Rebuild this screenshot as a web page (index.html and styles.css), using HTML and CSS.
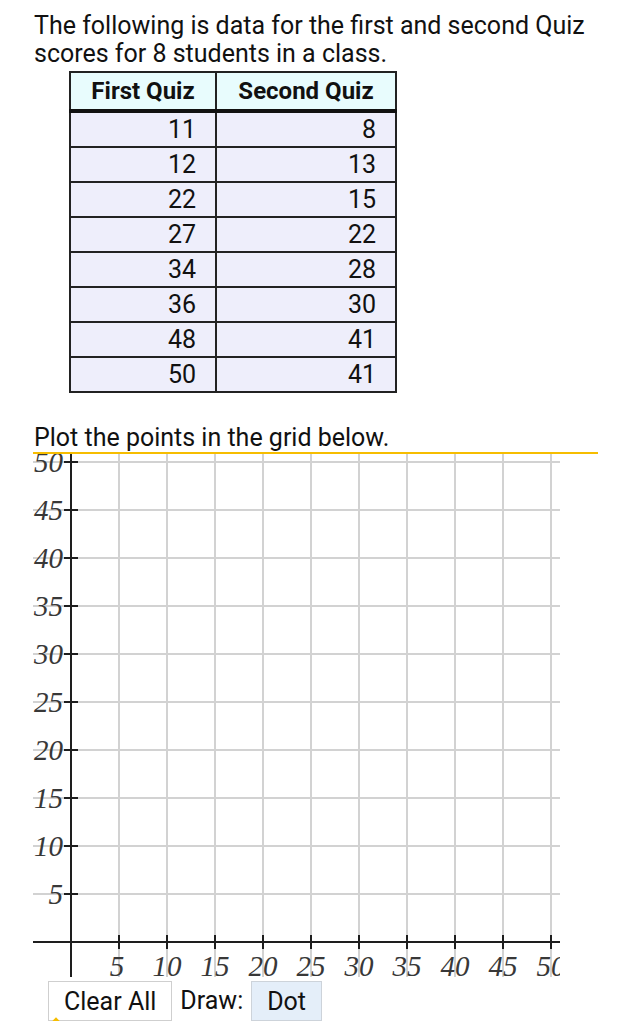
FILE: index.html
```html
<!DOCTYPE html>
<html>
<head>
<meta charset="utf-8">
<link rel="stylesheet" href="styles.css">
</head>
<body>
<div class="page">
  <p class="intro">The following is data for the first and second Quiz scores for 8 students in a class.</p>
  <table class="data">
    <colgroup><col class="c1"><col class="c2"></colgroup>
    <thead>
      <tr><th>First Quiz</th><th>Second Quiz</th></tr>
    </thead>
    <tbody>
      <tr><td>11</td><td>8</td></tr>
      <tr><td>12</td><td>13</td></tr>
      <tr><td>22</td><td>15</td></tr>
      <tr><td>27</td><td>22</td></tr>
      <tr><td>34</td><td>28</td></tr>
      <tr><td>36</td><td>30</td></tr>
      <tr><td>48</td><td>41</td></tr>
      <tr><td>50</td><td>41</td></tr>
    </tbody>
  </table>
  <p class="prompt">Plot the points in the grid below.</p>
  <div class="graph-wrap">
    <svg class="graph" width="527" height="527" viewBox="33 453 527 527" xmlns="http://www.w3.org/2000/svg">
      <g stroke="#d2d2d2" stroke-width="2">
        <line x1="33" y1="893" x2="560" y2="893"/>
        <line x1="33" y1="845" x2="560" y2="845"/>
        <line x1="33" y1="797" x2="560" y2="797"/>
        <line x1="33" y1="749" x2="560" y2="749"/>
        <line x1="33" y1="701" x2="560" y2="701"/>
        <line x1="33" y1="653" x2="560" y2="653"/>
        <line x1="33" y1="605" x2="560" y2="605"/>
        <line x1="33" y1="557" x2="560" y2="557"/>
        <line x1="33" y1="509" x2="560" y2="509"/>
        <line x1="33" y1="461" x2="560" y2="461"/>
        <line x1="119" y1="440" x2="119" y2="976"/>
        <line x1="167" y1="440" x2="167" y2="976"/>
        <line x1="215" y1="440" x2="215" y2="976"/>
        <line x1="263" y1="440" x2="263" y2="976"/>
        <line x1="311" y1="440" x2="311" y2="976"/>
        <line x1="359" y1="440" x2="359" y2="976"/>
        <line x1="407" y1="440" x2="407" y2="976"/>
        <line x1="455" y1="440" x2="455" y2="976"/>
        <line x1="503" y1="440" x2="503" y2="976"/>
        <line x1="551" y1="440" x2="551" y2="976"/>
      </g>
      <g class="ylab" text-anchor="end">
        <text x="63" y="903">5</text>
        <text x="63" y="855">10</text>
        <text x="63" y="807">15</text>
        <text x="63" y="759">20</text>
        <text x="63" y="711">25</text>
        <text x="63" y="663">30</text>
        <text x="63" y="615">35</text>
        <text x="63" y="567">40</text>
        <text x="63" y="519">45</text>
        <text x="63" y="471">50</text>
      </g>
      <g class="xlab" text-anchor="middle">
        <text x="117" y="975">5</text>
        <text x="167" y="975">10</text>
        <text x="215" y="975">15</text>
        <text x="263" y="975">20</text>
        <text x="311" y="975">25</text>
        <text x="359" y="975">30</text>
        <text x="407" y="975">35</text>
        <text x="455" y="975">40</text>
        <text x="503" y="975">45</text>
        <text x="551" y="975">50</text>
      </g>
      <g stroke="#1e1e1e" stroke-width="2">
        <line x1="33" y1="941" x2="560" y2="941"/>
        <line x1="71" y1="440" x2="71" y2="976"/>
        <line x1="119" y1="934" x2="119" y2="948"/>
        <line x1="167" y1="934" x2="167" y2="948"/>
        <line x1="215" y1="934" x2="215" y2="948"/>
        <line x1="263" y1="934" x2="263" y2="948"/>
        <line x1="311" y1="934" x2="311" y2="948"/>
        <line x1="359" y1="934" x2="359" y2="948"/>
        <line x1="407" y1="934" x2="407" y2="948"/>
        <line x1="455" y1="934" x2="455" y2="948"/>
        <line x1="503" y1="934" x2="503" y2="948"/>
        <line x1="551" y1="934" x2="551" y2="948"/>
        <line x1="64" y1="893" x2="78" y2="893"/>
        <line x1="64" y1="845" x2="78" y2="845"/>
        <line x1="64" y1="797" x2="78" y2="797"/>
        <line x1="64" y1="749" x2="78" y2="749"/>
        <line x1="64" y1="701" x2="78" y2="701"/>
        <line x1="64" y1="653" x2="78" y2="653"/>
        <line x1="64" y1="605" x2="78" y2="605"/>
        <line x1="64" y1="557" x2="78" y2="557"/>
        <line x1="64" y1="509" x2="78" y2="509"/>
        <line x1="64" y1="461" x2="78" y2="461"/>
      </g>
    </svg>
  </div>
  <div class="controls">
    <button class="btn">Clear All</button>
    <span class="label">Draw:</span>
    <button class="btn btn-active">Dot</button>
    <span class="focus-mark"></span>
  </div>
</div>
</body>
</html>
```

FILE: styles.css
```css
html, body {
  margin: 0;
  padding: 0;
  background: #ffffff;
}

body {
  font-family: Roboto, "Liberation Sans", sans-serif;
  color: #111111;
}

.page {
  padding: 12px 0 0 34px;
}

.intro {
  margin: 0;
  width: 565px;
  font-size: 25px;
  line-height: 28px;
}

.data {
  margin: 3px 0 0 35px;
  border-collapse: collapse;
  table-layout: fixed;
  width: 326px;
  border: 2px solid #222222;
  font-size: 25px;
}

.data .c1 {
  width: 146px;
}

.data .c2 {
  width: 180px;
}

.data th {
  background: #e8fcfd;
  font-weight: bold;
  font-size: 24px;
  height: 36px;
  padding: 0;
  text-align: center;
  border-left: 2px solid #222222;
  border-bottom: 4px solid #111111;
}

.data td {
  background: #eeeefb;
  height: 33px;
  padding: 0 19px 0 0;
  text-align: right;
  border-top: 2px solid #222222;
  border-left: 2px solid #222222;
}

.data tbody tr:first-child td {
  border-top: none;
}

.prompt {
  margin: 31px 0 0 0;
  font-size: 25px;
  line-height: 28px;
}

.graph-wrap {
  width: 565px;
  margin-left: -1px;
  border-top: 2px solid #f6bd00;
  overflow: hidden;
}

.graph {
  display: block;
}

.ylab text, .xlab text {
  font-family: "Liberation Serif", serif;
  font-style: italic;
  font-size: 29px;
  fill: #383838;
}

.controls {
  position: relative;
  display: flex;
  align-items: center;
  gap: 8px;
  height: 40px;
  margin-left: 14px;
}

.btn {
  font-family: Roboto, "Liberation Sans", sans-serif;
  font-size: 25px;
  color: #111111;
  background: #ffffff;
  border: 1.5px solid #cfcfcf;
  border-radius: 0;
  height: 40px;
  padding: 0 15px;
}

.btn-active {
  background: #e4eef9;
  border-color: #cdd3da;
}

.label {
  font-size: 25px;
  line-height: 40px;
  color: #111111;
}

.focus-mark {
  position: absolute;
  left: 4px;
  top: 38px;
  width: 8px;
  height: 8px;
  background: #f6bd00;
  transform: rotate(45deg);
}
```
